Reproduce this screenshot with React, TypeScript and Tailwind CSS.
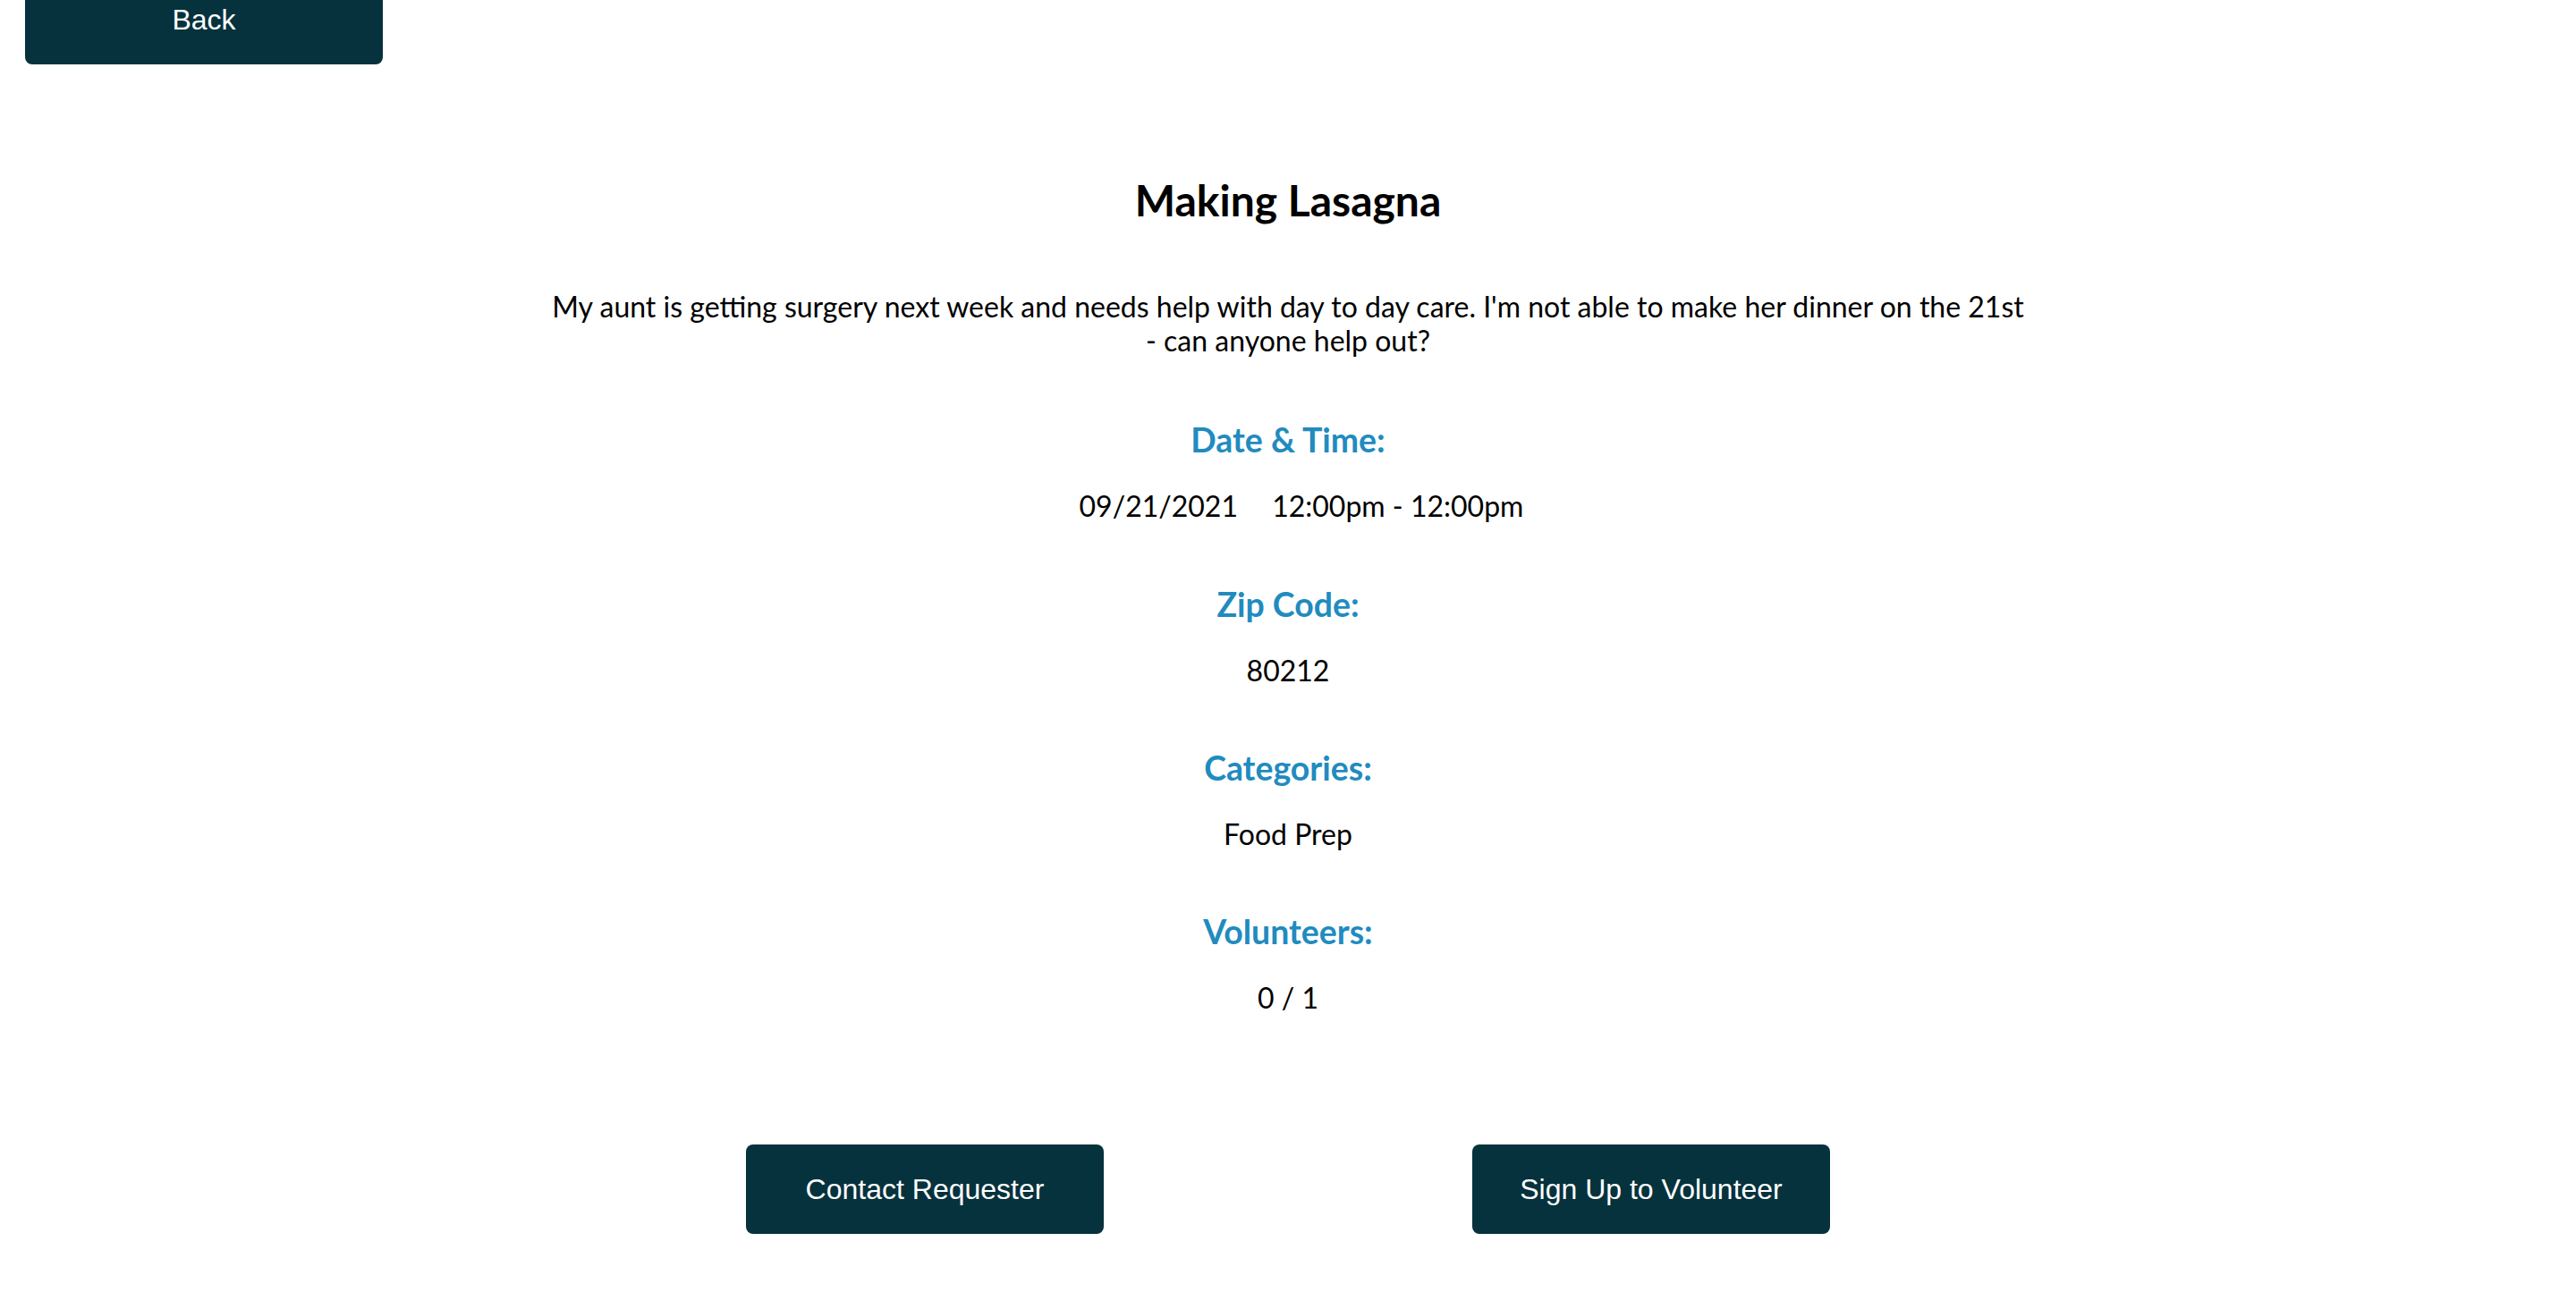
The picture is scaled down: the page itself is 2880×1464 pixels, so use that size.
const details = [
  { label: 'Zip Code:', value: '80212' },
  { label: 'Categories:', value: 'Food Prep' },
  { label: 'Volunteers:', value: '0 / 1' },
]

function ActionButton({ children, className = '' }: { children: React.ReactNode; className?: string }) {
  return (
    <button
      type="button"
      className={`w-[400px] h-[100px] rounded-[8px] bg-[#06323d] text-white text-[32px] font-['Liberation_Sans',Arial,sans-serif] ${className}`}
    >
      {children}
    </button>
  )
}

function Detail({ label, children, first = false }: { label: string; children: React.ReactNode; first?: boolean }) {
  return (
    <>
      <h3
        className={`${first ? 'mt-[70px]' : 'mt-[68px]'} text-[37.44px] leading-[1.2] font-bold text-[#218bbf] text-center`}
      >
        {label}
      </h3>
      <p className="mt-[32px] text-[32px] leading-[1.2] text-center">{children}</p>
    </>
  )
}

export default function App() {
  return (
    <div className="min-h-screen bg-white text-black font-['Lato','Noto_Sans',sans-serif] flex flex-col">
      <ActionButton className="self-start ml-[28px] -mt-[28px]">Back</ActionButton>

      <h2 className="mt-[123px] text-[48px] leading-[1.2] font-bold text-center">Making Lasagna</h2>

      <p className="mt-[71px] self-center w-[1654px] text-[32px] leading-[1.2] text-center">
        My aunt is getting surgery next week and needs help with day to day care. I'm not able to make her dinner on the 21st - can anyone help out?
      </p>

      <Detail label="Date & Time:" first>
        <span className="ml-[30px]">09/21/2021</span> <span className="ml-[30px]">12:00pm - 12:00pm</span>
      </Detail>

      {details.map((d) => (
        <Detail key={d.label} label={d.label}>
          {d.value}
        </Detail>
      ))}

      <div className="mt-[144px] flex justify-center gap-[412px]">
        <ActionButton>Contact Requester</ActionButton>
        <ActionButton>Sign Up to Volunteer</ActionButton>
      </div>
    </div>
  )
}
